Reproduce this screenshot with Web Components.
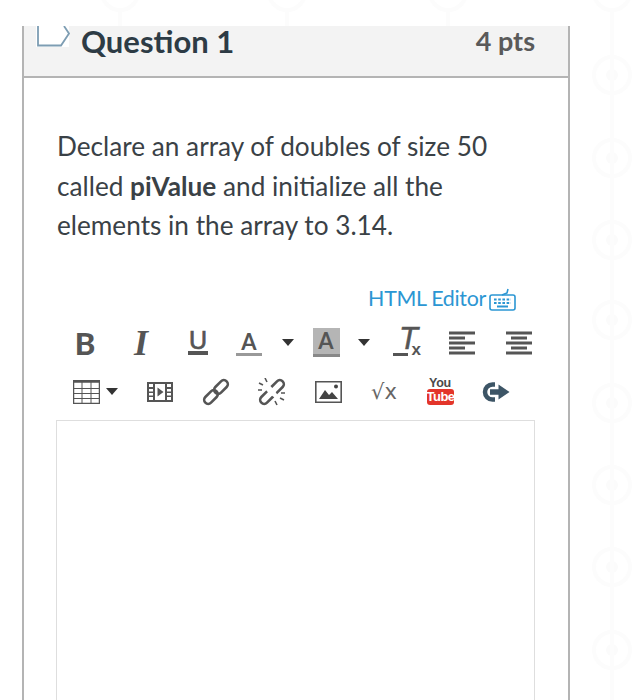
<!DOCTYPE html>
<html lang="en">
<head>
<meta charset="utf-8">
<title>Question 1</title>
<style>
  html, body { margin: 0; height: 100%; background: #fff; overflow: hidden; }
  body { font-family: Lato, "Open Sans", sans-serif; }
</style>
</head>
<body>
<page-watermark></page-watermark>
<quiz-question points="4 pts" title-text="Question 1">Declare an array of doubles of size 50<br>called <b>piValue</b> and initialize all the<br>elements in the array to 3.14.</quiz-question>

<script>
(() => {
  // faint chain of rings behind the page, on its own canvas
  class PageWatermark extends HTMLElement {
    constructor() {
      super();
      const ring = (x, y) => `<circle cx="${x}" cy="${y}" r="18" fill="none" stroke="#fcfcfc" stroke-width="4"/><circle cx="${x}" cy="${y}" r="6" fill="#fbfbfb"/>`;
      const rings = [75, 158, 240, 320, 403, 485, 567, 650].map((y) => ring(612, y)).join('');
      const top = [120, 287, 448, 612].map((x) => `${ring(x, -8)}<path d="M${x} 10V30" stroke="#fcfcfc" stroke-width="4"/>`).join('');
      this.attachShadow({ mode: 'open' }).innerHTML = `
        <style>
          :host { display: block; position: absolute; inset: 0; }
          svg { display: block; }
        </style>
        <svg width="636" height="700" viewBox="0 0 636 700" aria-hidden="true">
          ${top}${rings}
          <path d="M612 30V700" stroke="#fcfcfc" stroke-width="4"/>
        </svg>`;
    }
  }

  class QuizQuestion extends HTMLElement {
    constructor() {
      super();
      const title = this.getAttribute('title-text') || '';
      const points = this.getAttribute('points') || '';
      this.attachShadow({ mode: 'open' }).innerHTML = `
        <style>
          :host {
            display: flex;
            flex-direction: column;
            position: relative;
            box-sizing: border-box;
            width: 548px;
            height: 674px;
            margin: 26px 0 0 22px;
            background: #fff;
            border: solid #b4b4b4;
            border-width: 0 2px;
            font-family: Lato, "Open Sans", sans-serif;
            color: #2d3b45;
          }
          header {
            flex: none;
            box-sizing: border-box;
            height: 52px;
            display: flex;
            align-items: flex-start;
            background: #f3f3f3;
            border-bottom: 2px solid #b4b4b4;
            padding: 0 33px 0 12px;
          }
          header svg { flex: none; display: block; }
          h2 {
            margin: 0 0 0 9px;
            font-size: 31px;
            font-weight: 700;
            line-height: 30px;
            flex: 1;
          }
          .pts {
            font-size: 27px;
            font-weight: 700;
            line-height: 29px;
            color: #5a5a5a;
          }
          .text {
            flex: none;
            margin: 0;
            padding: 49px 40px 0 33px;
            font-size: 26.200px;
            line-height: 39.500px;
            color: #3a4146;
          }
          .editor-link {
            flex: none;
            display: flex;
            justify-content: flex-end;
            align-items: flex-end;
            margin: 31px 52px 7px 0;
            height: 34px;
            color: #2b96d3;
            font-size: 21.400px;
            letter-spacing: -0.3px;
          }
          .editor-link svg { display: block; margin-bottom: -1px; }
          .area {
            flex: 1;
            min-height: 0;
            box-sizing: border-box;
            width: 479px;
            margin: 1px 0 0 32px;
            border: 1px solid #dedede;
            border-bottom: 0;
          }
        </style>
        <header>
          <svg width="36" height="21" viewBox="0 0 36 21" aria-hidden="true">
            <path d="M0 0h33v21H0z" fill="#fff"/>
            <path d="M2 0V19.500H25L33 7.500 28 0" fill="none" stroke="#7d9db3" stroke-width="1.800"/>
          </svg>
          <h2>${title}</h2>
          <span class="pts">${points}</span>
        </header>
        <p class="text"><slot></slot></p>
        <div class="editor-link">
          <span>HTML Editor</span>
          <svg width="30" height="25" viewBox="0 0 30 25" fill="none" stroke="#2b96d3" aria-hidden="true">
            <rect x="4" y="8" width="25" height="15" rx="2" stroke-width="1.600"/>
            <path d="M16 8l5-2 1-4" stroke-width="1.600"/>
            <path d="M8 12.500h17M8 16h17" stroke-width="2.200" stroke-dasharray="2.600 1.600"/>
            <path d="M11 19.500h11" stroke-width="2"/>
          </svg>
        </div>
        <editor-toolbar></editor-toolbar>
        <div class="area"></div>`;
    }
  }

  class ToolCell extends HTMLElement {
    constructor() {
      super();
      this.attachShadow({ mode: 'open' }).innerHTML = `
        <style>
          :host {
            display: flex;
            flex: none;
            align-items: center;
            justify-content: center;
            height: 100%;
            box-sizing: border-box;
            color: #555;
          }
        </style>
        <slot></slot>`;
    }
  }

  class EditorToolbar extends HTMLElement {
    constructor() {
      super();
      const caret = '<svg width="12" height="7" viewBox="0 0 12 7"><path d="M0 0h12L6 7z" fill="#333"/></svg>';
      const cell = (w, inner) => `<tool-cell style="width:${w}px">${inner}</tool-cell>`;
      const alignLeft = '<svg width="26" height="24" viewBox="0 0 26 24"><path d="M0 2h26M0 7h16M0 12h26M0 17h16M0 22h26" stroke="#555" stroke-width="3.200"/></svg>';
      const alignCenter = '<svg width="26" height="24" viewBox="0 0 26 24"><path d="M0 2h26M5 7h16M0 12h26M5 17h16M0 22h26" stroke="#555" stroke-width="3.200"/></svg>';
      const rays = '<path d="M7 0l2 4M1 5l4 2M0 12h4M27 15h-4M26 22l-4-2M19 27l-2-4" stroke-width="1.600"/>';
      this.attachShadow({ mode: 'open' }).innerHTML = `
        <style>
          :host { display: block; flex: none; padding: 0 0 0 33px; }
          .row { display: flex; align-items: center; height: 50px; }
          .row + .row { margin: -1px 0 2px; }
          .b { font: 900 31px/30px Lato, sans-serif; color: #555; }
          .i { font: italic 700 36px/30px "Liberation Serif", serif; color: #555; }
          .u { font: 400 25px/21px "Liberation Sans", sans-serif; border-bottom: 4px solid #555; padding: 0 0.500px; color: #555; -webkit-text-stroke: .7px #555; }
          .a { font: 700 22px/23px Lato, sans-serif; border-bottom: 3px solid #999; padding: 0 5px; color: #555; }
          .ah { font: 700 22px/26px Lato, sans-serif; background: #b5b5b5; border-bottom: 3px solid #888; width: 27px; text-align: center; color: #555; }
          .tx { position: relative; width: 28px; height: 26px; color: #555; }
          .tx i { position: absolute; left: 6px; top: -6px; font: italic 400 31px/30px "Liberation Sans", sans-serif; -webkit-text-stroke: .5px #555; }
          .tx u { position: absolute; left: 0; bottom: 0; width: 15px; height: 3px; background: #555; }
          .tx span { position: absolute; right: 0; bottom: -1px; font: 700 17px/14px "Liberation Sans", sans-serif; }
          .sq { font: 400 21px "DejaVu Sans", sans-serif; color: #666; white-space: nowrap; }
          .yt { display: flex; flex-direction: column; align-items: center; width: 27px; font-family: "Liberation Sans", sans-serif; font-weight: 700; }
          .yt b:first-child { font-size: 12.500px; line-height: 11px; color: #4a4a4a; letter-spacing: -0.300px; }
          .yt b:last-child { font-size: 13px; line-height: 16px; height: 16px; width: 27px; text-align: center; color: #fff; background: #e3352a; border-radius: 3px; letter-spacing: -0.500px; }
        </style>
        <div class="row">
          ${cell(56, '<span class="b">B</span>')}
          ${cell(56, '<span class="i">I</span>')}
          ${cell(58, '<span class="u">U</span>')}
          ${cell(44, '<span class="a">A</span>')}
          ${cell(34, caret)}
          ${cell(42, '<span class="ah">A</span>')}
          ${cell(34, caret)}
          ${cell(52, '<span class="tx"><i>T</i><u></u><span>x</span></span>')}
          ${cell(58, alignLeft)}
          ${cell(56, alignCenter)}
        </div>
        <div class="row">
          ${cell(15, '')}
          ${cell(28, `<svg width="27" height="24" viewBox="0 0 27 24" fill="none" stroke="#555"><path d="M.5.500h26v23H.5z" stroke-width="1.500"/><path d="M0 1.500h27" stroke-width="2.500"/><path d="M0 8.500h27M0 13.500h27M0 18.500h27M9 2v22M18 2v22" stroke-width="1"/></svg>`)}
          ${cell(6, '')}
          ${cell(12, caret)}
          ${cell(14, '')}
          ${cell(56, `<svg width="26" height="20" viewBox="0 0 26 20"><path d="M0 0h26v20H0z" fill="#555"/><path d="M8 2h10v16H8z" fill="#fff"/><path d="M2 2h4v3H2zM2 7h4v2.500H2zM2 11h4v2.500H2zM2 15h4v3H2zM20 2h4v3h-4zM20 7h4v2.500h-4zM20 11h4v2.500h-4zM20 15h4v3h-4z" fill="#fff"/><path d="M10.500 5.500l6 4.500-6 4.500z" fill="#555"/></svg>`)}
          ${cell(56, `<svg width="28" height="28" viewBox="0 0 28 28" fill="none" stroke="#555" stroke-width="2.600"><rect x="1" y="15" width="16" height="8" rx="4" transform="rotate(-45 9 19)"/><rect x="11" y="5" width="16" height="8" rx="4" transform="rotate(-45 19 9)"/></svg>`)}
          ${cell(56, `<svg width="28" height="28" viewBox="0 0 28 28" fill="none" stroke="#555" stroke-width="2.600"><rect x="1" y="15" width="16" height="8" rx="4" pathLength="100" stroke-dasharray="72 28" stroke-dashoffset="-48" transform="rotate(-45 9 19)"/><rect x="11" y="5" width="16" height="8" rx="4" pathLength="100" stroke-dasharray="72 28" stroke-dashoffset="0" transform="rotate(-45 19 9)"/>${rays}</svg>`)}
          ${cell(56, `<svg width="27" height="22" viewBox="0 0 27 22"><path d="M.8.800h25.400v20.400H.8z" fill="#fff" stroke="#555" stroke-width="1.600"/><path d="M4 18l6-9 4 5 3-3 6 7z" fill="#444"/><circle cx="21" cy="5.500" r="2" fill="#444"/></svg>`)}
          ${cell(56, '<span class="sq">√x</span>')}
          ${cell(56, '<span class="yt"><b>You</b><b>Tube</b></span>')}
          ${cell(56, `<svg width="28" height="22" viewBox="0 0 28 22" fill="none"><path d="M13 3.500H10.500a7.500 7.500 0 0 0 0 15H13" stroke="#3d5566" stroke-width="4.500"/><path d="M8 11h10" stroke="#3d5566" stroke-width="5.500"/><path d="M16.500 3.500L27.500 11 16.500 18.500z" fill="#3d5566"/></svg>`)}
        </div>`;
    }
  }

  customElements.define('page-watermark', PageWatermark);
  customElements.define('tool-cell', ToolCell);
  customElements.define('editor-toolbar', EditorToolbar);
  customElements.define('quiz-question', QuizQuestion);
})();
</script>
</body>
</html>
